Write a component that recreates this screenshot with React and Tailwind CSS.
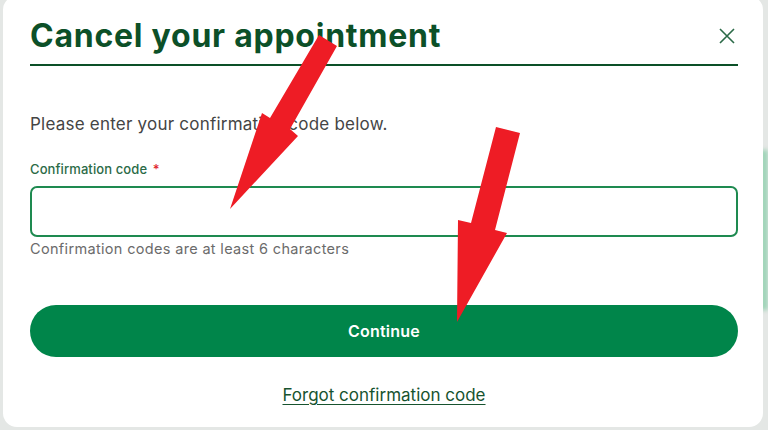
import React from "react";

function Arrows() {
  return (
    <svg className="absolute inset-0 pointer-events-none" width="768" height="430" viewBox="0 0 768 430">
      <polygon
        points="319,35 337,46 290,129 298,136 230,209 262,113 270,118"
        fill="#ee1c25"
      />
      <polygon
        points="496,127 520,133 495,230 507,233 457,322 458,220 471,223"
        fill="#ee1c25"
      />
    </svg>
  );
}

export default function App() {
  return (
    <div
      className="relative w-[768px] h-[430px] overflow-hidden bg-[#e4e7e5]"
      style={{ fontFamily: "Inter, 'Noto Sans', sans-serif" }}
    >
      <div className="absolute right-0 top-[150px] w-[8px] h-[160px] bg-[#9fd4b8] blur-[2px]" />
      <div className="relative ml-[3px] mt-[-4px] w-[760px] h-[431px] rounded-[14px] bg-white pl-[27px] pr-[25px] pt-[20px]">
        <div className="flex items-center justify-between h-[40px] mb-[8px]">
          <h1 className="text-[32px] leading-[40px] font-bold text-[#0c5028] tracking-[0.75px]">
            Cancel your appointment
          </h1>
          <svg width="18" height="18" viewBox="0 0 18 18" className="mr-[2px]">
            <path d="M2 2 L16 16 M16 2 L2 16" stroke="#2b6a48" strokeWidth="1.6" fill="none" />
          </svg>
        </div>
        <div className="h-[2px] bg-[#0c5028]" />
        <p className="mt-[46px] text-[17px] leading-[24px] text-[#454545] tracking-[0.22px]">
          Please enter your confirmation code below.
        </p>
        <label className="block mt-[24px] text-[13px] leading-[18px] font-medium text-[#2b6b47] tracking-[0.1px]">
          Confirmation code <span className="text-[#e0242c] ml-[2px]">*</span>
        </label>
        <input
          type="text"
          className="block mt-[8px] w-full h-[51px] rounded-[7px] border-2 border-[#1e8a50] outline-none px-3"
        />
        <p className="mt-[2px] text-[14.5px] leading-[20px] text-[#6b6b6b] tracking-[0.33px]">
          Confirmation codes are at least 6 characters
        </p>
        <button className="mt-[46px] w-full h-[52px] rounded-full bg-[#00854a] text-white text-[16px] font-semibold tracking-[0.2px]">
          Continue
        </button>
        <div className="mt-[26px] text-center">
          <a className="text-[17px] leading-[24px] text-[#17532f] underline underline-offset-[3px]">
            Forgot confirmation code
          </a>
        </div>
      </div>
      <Arrows />
    </div>
  );
}
